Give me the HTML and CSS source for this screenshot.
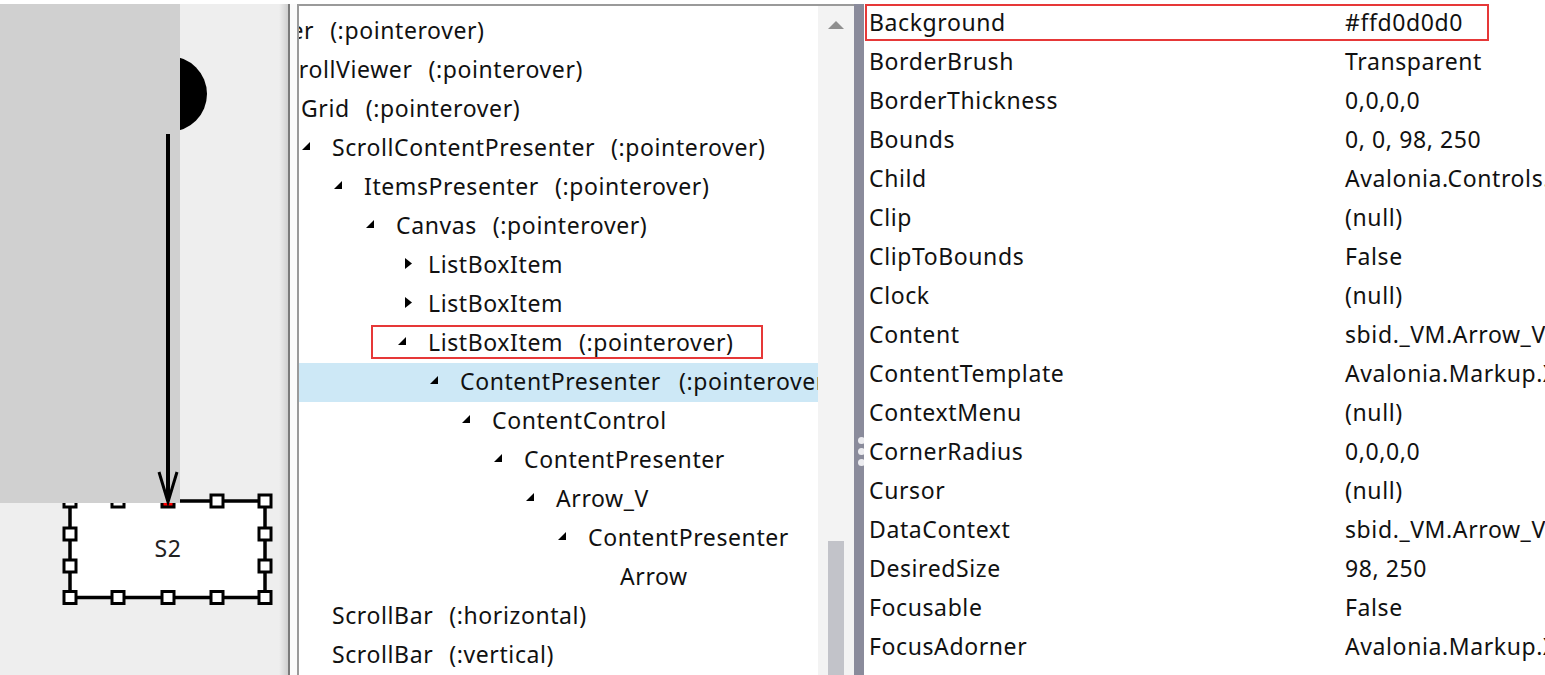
FILE: index.html
```html
<!DOCTYPE html>
<html>
<head>
<meta charset="utf-8">
<title>DevTools</title>
<link rel="stylesheet" href="styles.css">
</head>
<body>
<div class="app">
  <div class="canvas-pane">
    <svg class="canvas" width="288" height="671" viewBox="0 4 288 671" xmlns="http://www.w3.org/2000/svg">
      <circle cx="169" cy="94" r="38" fill="#000"/>
      <rect x="70" y="501" width="195" height="96.5" fill="#fff" stroke="#000" stroke-width="3.5"/>
      <text x="168" y="557" text-anchor="middle" class="node-label">S2</text>
      <g fill="#fff" stroke="#000" stroke-width="3">
        <rect x="64" y="495" width="12" height="12"/>
        <rect x="112" y="495" width="12" height="12"/>
        <rect x="162" y="495" width="12" height="12" fill="#ff0000"/>
        <rect x="211" y="495" width="12" height="12"/>
        <rect x="259" y="495" width="12" height="12"/>
        <rect x="64" y="528" width="12" height="12"/>
        <rect x="259" y="528" width="12" height="12"/>
        <rect x="64" y="560" width="12" height="12"/>
        <rect x="259" y="560" width="12" height="12"/>
        <rect x="64" y="591.5" width="12" height="12"/>
        <rect x="112" y="591.5" width="12" height="12"/>
        <rect x="162" y="591.5" width="12" height="12"/>
        <rect x="211" y="591.5" width="12" height="12"/>
        <rect x="259" y="591.5" width="12" height="12"/>
      </g>
      <rect x="0" y="4" width="180" height="499" fill="#d0d0d0"/>
      <line x1="168" y1="134" x2="168" y2="500" stroke="#000" stroke-width="4"/>
      <polyline points="159,472 168,502 177,472" fill="none" stroke="#000" stroke-width="3"/>
    </svg>
  </div>
  <div class="pane-sep"></div>
  <div class="tree-pane">
    <div class="tree">
      <div class="row l0"><span class="exp open"><svg width="8" height="8" viewBox="0 0 8 8"><polygon points="8,0 8,8 0,8"/></svg></span><span class="name">Border</span><span class="cls">(:pointerover)</span></div>
      <div class="row l1"><span class="exp open"><svg width="8" height="8" viewBox="0 0 8 8"><polygon points="8,0 8,8 0,8"/></svg></span><span class="name">ScrollViewer</span><span class="cls">(:pointerover)</span></div>
      <div class="row l2"><span class="exp open"><svg width="8" height="8" viewBox="0 0 8 8"><polygon points="8,0 8,8 0,8"/></svg></span><span class="name">Grid</span><span class="cls">(:pointerover)</span></div>
      <div class="row l3"><span class="exp open"><svg width="8" height="8" viewBox="0 0 8 8"><polygon points="8,0 8,8 0,8"/></svg></span><span class="name">ScrollContentPresenter</span><span class="cls">(:pointerover)</span></div>
      <div class="row l4"><span class="exp open"><svg width="8" height="8" viewBox="0 0 8 8"><polygon points="8,0 8,8 0,8"/></svg></span><span class="name">ItemsPresenter</span><span class="cls">(:pointerover)</span></div>
      <div class="row l5"><span class="exp open"><svg width="8" height="8" viewBox="0 0 8 8"><polygon points="8,0 8,8 0,8"/></svg></span><span class="name">Canvas</span><span class="cls">(:pointerover)</span></div>
      <div class="row l6"><span class="exp closed"><svg width="7" height="11" viewBox="0 0 7 11"><polygon points="0,0 7,5.5 0,11"/></svg></span><span class="name">ListBoxItem</span></div>
      <div class="row l6"><span class="exp closed"><svg width="7" height="11" viewBox="0 0 7 11"><polygon points="0,0 7,5.5 0,11"/></svg></span><span class="name">ListBoxItem</span></div>
      <div class="row l6"><span class="exp open"><svg width="8" height="8" viewBox="0 0 8 8"><polygon points="8,0 8,8 0,8"/></svg></span><span class="name">ListBoxItem</span><span class="cls">(:pointerover)</span></div>
      <div class="row l7 sel"><span class="exp open"><svg width="8" height="8" viewBox="0 0 8 8"><polygon points="8,0 8,8 0,8"/></svg></span><span class="name">ContentPresenter</span><span class="cls">(:pointerover)</span></div>
      <div class="row l8"><span class="exp open"><svg width="8" height="8" viewBox="0 0 8 8"><polygon points="8,0 8,8 0,8"/></svg></span><span class="name">ContentControl</span></div>
      <div class="row l9"><span class="exp open"><svg width="8" height="8" viewBox="0 0 8 8"><polygon points="8,0 8,8 0,8"/></svg></span><span class="name">ContentPresenter</span></div>
      <div class="row l10"><span class="exp open"><svg width="8" height="8" viewBox="0 0 8 8"><polygon points="8,0 8,8 0,8"/></svg></span><span class="name">Arrow_V</span></div>
      <div class="row l11"><span class="exp open"><svg width="8" height="8" viewBox="0 0 8 8"><polygon points="8,0 8,8 0,8"/></svg></span><span class="name">ContentPresenter</span></div>
      <div class="row l12"><span class="exp"></span><span class="name">Arrow</span></div>
      <div class="row l3"><span class="exp"></span><span class="name">ScrollBar</span><span class="cls">(:horizontal)</span></div>
      <div class="row l3"><span class="exp"></span><span class="name">ScrollBar</span><span class="cls">(:vertical)</span></div>
      <div class="tree-hl"></div>
    </div>
    <div class="vscroll">
      <svg class="up" width="16" height="8" viewBox="0 0 16 8"><polygon points="0,8 8,0 16,8"/></svg>
      <div class="thumb"></div>
    </div>
  </div>
  <div class="splitter"><span class="dot"></span><span class="dot"></span><span class="dot"></span></div>
  <div class="props">
    <div class="prow"><span class="pname">Background</span><span class="pval">#ffd0d0d0</span></div>
    <div class="prow"><span class="pname">BorderBrush</span><span class="pval">Transparent</span></div>
    <div class="prow"><span class="pname">BorderThickness</span><span class="pval">0,0,0,0</span></div>
    <div class="prow"><span class="pname">Bounds</span><span class="pval">0, 0, 98, 250</span></div>
    <div class="prow"><span class="pname">Child</span><span class="pval">Avalonia.Controls.ContentPresenter</span></div>
    <div class="prow"><span class="pname">Clip</span><span class="pval">(null)</span></div>
    <div class="prow"><span class="pname">ClipToBounds</span><span class="pval">False</span></div>
    <div class="prow"><span class="pname">Clock</span><span class="pval">(null)</span></div>
    <div class="prow"><span class="pname">Content</span><span class="pval">sbid._VM.Arrow_VM</span></div>
    <div class="prow"><span class="pname">ContentTemplate</span><span class="pval">Avalonia.Markup.Xaml.Templates.DataTemplate</span></div>
    <div class="prow"><span class="pname">ContextMenu</span><span class="pval">(null)</span></div>
    <div class="prow"><span class="pname">CornerRadius</span><span class="pval">0,0,0,0</span></div>
    <div class="prow"><span class="pname">Cursor</span><span class="pval">(null)</span></div>
    <div class="prow"><span class="pname">DataContext</span><span class="pval">sbid._VM.Arrow_VM</span></div>
    <div class="prow"><span class="pname">DesiredSize</span><span class="pval">98, 250</span></div>
    <div class="prow"><span class="pname">Focusable</span><span class="pval">False</span></div>
    <div class="prow"><span class="pname">FocusAdorner</span><span class="pval">Avalonia.Markup.Xaml.Templates.Template</span></div>
    <div class="prop-hl"></div>
  </div>
</div>
</body>
</html>
```

FILE: styles.css
```css
* { box-sizing: border-box; }
html, body { margin: 0; padding: 0; }
body {
  width: 1545px;
  height: 675px;
  overflow: hidden;
  background: #ffffff;
  padding-top: 4px;
  font-family: "Noto Sans", "DejaVu Sans", sans-serif;
  font-size: 23px;
  letter-spacing: 0.6px;
  color: #111111;
}
.app { display: flex; height: 671px; }

/* left design canvas */
.canvas-pane {
  width: 288px;
  flex: none;
  background: #eeeeee;
  position: relative;
  overflow: hidden;
}
.canvas-pane::after {
  content: "";
  position: absolute;
  top: 0;
  right: 0;
  width: 9px;
  height: 100%;
  background: linear-gradient(to right, rgba(0,0,0,0), rgba(0,0,0,0.13));
}
.canvas { display: block; }
.node-label { font-family: "Noto Sans", sans-serif; font-size: 23px; letter-spacing: 0.5px; fill: #222222; }

.pane-sep {
  width: 9px;
  flex: none;
  border-left: 2px solid #7a7a7a;
  background: #fbfbfb;
}

/* visual tree */
.tree-pane {
  width: 557px;
  flex: none;
  display: flex;
  border-left: 2px solid #9a9a9a;
  border-top: 2px solid #9a9a9a;
}
.tree {
  flex: 1;
  min-width: 0;
  overflow: hidden;
  padding-top: 6px;
  position: relative;
  background: #ffffff;
}
.row {
  display: flex;
  align-items: center;
  height: 39px;
  padding-bottom: 4px;
  white-space: nowrap;
}
.row.sel { background: #cde8f6; }
.exp {
  flex: none;
  width: 32px;
  display: flex;
  align-items: center;
}
.exp svg { display: block; fill: #000; }
.exp.open svg { margin-left: 2px; margin-top: -1px; }
.exp.closed svg { margin-left: 9px; }
.name { flex: none; }
.cls { flex: none; margin-left: 16px; }
.sel .cls { margin-left: 18px; }

.l0 { margin-left: -95px; }
.l1 { margin-left: -57px; }
.l2 { margin-left: -30px; }
.l3 { margin-left: 1px; }
.l4 { margin-left: 33px; }
.l5 { margin-left: 65px; }
.l6 { margin-left: 97px; }
.l7 { padding-left: 129px; }
.l8 { margin-left: 161px; }
.l9 { margin-left: 193px; }
.l10 { margin-left: 225px; }
.l11 { margin-left: 257px; }
.l12 { margin-left: 289px; }

.tree-hl {
  position: absolute;
  left: 72px;
  top: 319px;
  width: 392px;
  height: 34px;
  border: 2px solid #e63838;
}

.vscroll {
  width: 36px;
  flex: none;
  background: #f3f3f3;
  display: flex;
  flex-direction: column;
  align-items: center;
}
.vscroll .up { display: block; margin-top: 15px; fill: #8f8f8f; }
.vscroll .thumb {
  margin-top: auto;
  width: 16px;
  height: 134px;
  background: #c2c3c9;
}

/* splitter */
.splitter {
  width: 10px;
  flex: none;
  background: #8a8b9b;
  display: flex;
  flex-direction: column;
  align-items: flex-end;
  gap: 4px;
  padding-top: 433px;
}
.dot {
  width: 7px;
  height: 7px;
  border-radius: 50%;
  background: #ececf0;
  margin-right: -1px;
}

/* properties */
.props {
  flex: 1;
  min-width: 0;
  position: relative;
  overflow: hidden;
  background: #ffffff;
}
.prow {
  display: flex;
  align-items: center;
  height: 39px;
  padding-bottom: 4px;
  white-space: nowrap;
}
.pname { flex: none; width: 481px; padding-left: 5px; }
.pval { flex: none; }
.prop-hl {
  position: absolute;
  left: 1px;
  top: 0;
  width: 624px;
  height: 37px;
  border: 2px solid #e63838;
}
```
